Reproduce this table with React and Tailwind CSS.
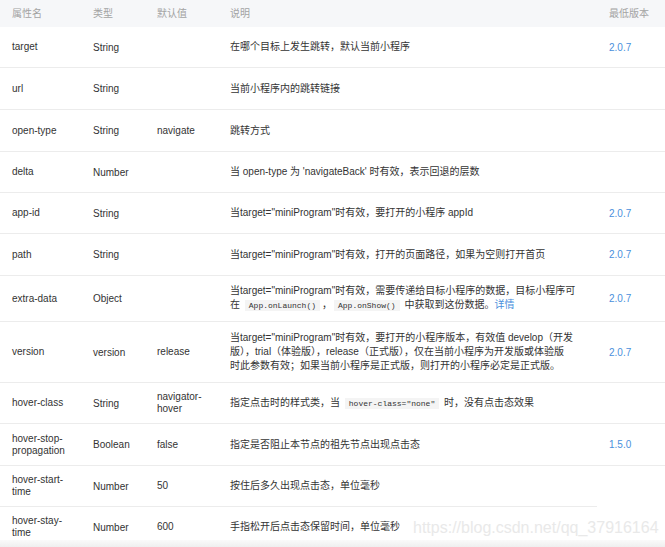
import React from 'react';

const ROWS = [
  { name: 'target', type: 'String', def: '', desc: '在哪个目标上发生跳转，默认当前小程序', ver: '2.0.7', h: 'h-[40px]' },
  { name: 'url', type: 'String', def: '', desc: '当前小程序内的跳转链接', ver: '', h: 'h-[41px]' },
  { name: 'open-type', type: 'String', def: 'navigate', desc: '跳转方式', ver: '', h: 'h-[41px]' },
  { name: 'delta', type: 'Number', def: '', desc: "当 open-type 为 'navigateBack' 时有效，表示回退的层数", ver: '', h: 'h-[40px]' },
  { name: 'app-id', type: 'String', def: '', desc: '当target="miniProgram"时有效，要打开的小程序 appId', ver: '2.0.7', h: 'h-[40px]' },
  { name: 'path', type: 'String', def: '', desc: '当target="miniProgram"时有效，打开的页面路径，如果为空则打开首页', ver: '2.0.7', h: 'h-[41px]' },
  { name: 'extra-data', type: 'Object', def: '', desc: 'extra', ver: '2.0.7', h: 'h-[45px]' },
  { name: 'version', type: 'version', def: 'release', desc: 'version', ver: '2.0.7', h: 'h-[60px]' },
  { name: 'hover-class', type: 'String', def: 'navigator-hover', desc: 'hover', ver: '', h: 'h-[40px]' },
  { name: 'hover-stop-propagation', type: 'Boolean', def: 'false', desc: '指定是否阻止本节点的祖先节点出现点击态', ver: '1.5.0', h: 'h-[41px]' },
  { name: 'hover-start-time', type: 'Number', def: '50', desc: '按住后多久出现点击态，单位毫秒', ver: '', h: 'h-[40px]' },
  { name: 'hover-stay-time', type: 'Number', def: '600', desc: '手指松开后点击态保留时间，单位毫秒', ver: '', h: 'h-[40px]' },
];

const Code = ({ children }) => (
  <code className="bg-[#f4f4f4] px-[4px] py-[1px] mx-[2px] text-[8px] text-[#333] [font-family:'Liberation_Mono','DejaVu_Sans_Mono',monospace]">
    {children}
  </code>
);

function Desc({ row }) {
  if (row.desc === 'extra') {
    return (
      <div className="whitespace-nowrap">
        <div>当target="miniProgram"时有效，需要传递给目标小程序的数据，目标小程序可</div>
        <div>
          在 <Code>App.onLaunch()</Code>，<Code>App.onShow()</Code> 中获取到这份数据。
          <span className="text-[#4a8fdc]">详情</span>
        </div>
      </div>
    );
  }
  if (row.desc === 'version') {
    return (
      <div className="whitespace-nowrap">
        <div>当target="miniProgram"时有效，要打开的小程序版本，有效值 develop（开发</div>
        <div>版），trial（体验版），release（正式版），仅在当前小程序为开发版或体验版</div>
        <div>时此参数有效；如果当前小程序是正式版，则打开的小程序必定是正式版。</div>
      </div>
    );
  }
  if (row.desc === 'hover') {
    return (
      <span>
        指定点击时的样式类，当 <Code>hover-class="none"</Code> 时，没有点击态效果
      </span>
    );
  }
  return <span>{row.desc}</span>;
}

function breakName(name) {
  if (name === 'hover-stop-propagation') return ['hover-stop-', 'propagation'];
  if (name === 'hover-start-time') return ['hover-start-', 'time'];
  if (name === 'hover-stay-time') return ['hover-stay-', 'time'];
  if (name === 'navigator-hover') return ['navigator-', 'hover'];
  return [name];
}

const Lines = ({ text }) => (
  <div className="leading-[12px]">
    {breakName(text).map((t) => (
      <div key={t}>{t}</div>
    ))}
  </div>
);

export default function App() {
  return (
    <div className="relative w-[665px] h-[547px] overflow-hidden bg-white text-[10px] text-[#333] [font-family:'Liberation_Sans','Noto_Sans_CJK_SC',sans-serif]">
      {/* header */}
      <div className="grid grid-cols-[81px_64px_73px_379px_1fr] items-center h-[27px] pl-[12px] bg-[#f6f7f9] text-[#a3a3a3]">
        <div>属性名</div>
        <div>类型</div>
        <div>默认值</div>
        <div>说明</div>
        <div>最低版本</div>
      </div>

      {ROWS.map((r, i) => (
        <div key={r.name} className="flex flex-col">
          <div className={`grid grid-cols-[81px_64px_73px_379px_1fr] items-center ${r.h} pl-[12px]`}>
            <Lines text={r.name} />
            <div>{r.type}</div>
            <Lines text={r.def} />
            <div className="leading-[14px] pr-[16px]">
              <Desc row={r} />
            </div>
            <div className="text-[#4a8fdc]">{r.ver}</div>
          </div>
          {i < ROWS.length - 1 && (
            <div className={`h-px bg-[#ececec] ${i === ROWS.length - 2 ? 'w-[597px]' : 'w-full'}`} />
          )}
        </div>
      ))}

      {/* bottom shade */}
      <div className="absolute left-0 right-0 bottom-0 h-[7px] bg-gradient-to-b from-[#fafafa] to-[#efefef]" />

      {/* watermark */}
      <div className="absolute left-[413px] top-[518px] text-[16px] leading-[20px] text-[#e9e9e9] [font-family:'Liberation_Sans',sans-serif] [text-shadow:0_0_1px_#fff]">
        https://blog.csdn.net/qq_37916164
      </div>
    </div>
  );
}
